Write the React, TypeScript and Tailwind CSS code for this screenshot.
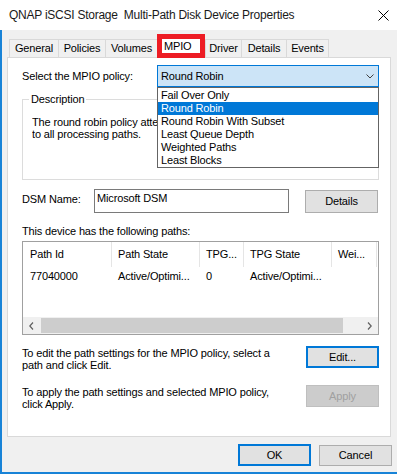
import React from 'react';

const tabsLeft = [
  { label: 'General', w: 'w-[49px]' },
  { label: 'Policies', w: 'w-[47px]' },
  { label: 'Volumes', w: 'w-[52px]' },
];
const tabsRight = [
  { label: 'Driver', w: 'w-[36px]' },
  { label: 'Details', w: 'w-[45px]' },
  { label: 'Events', w: 'w-[43px] border-r' },
];

const policies = [
  'Fail Over Only',
  'Round Robin',
  'Round Robin With Subset',
  'Least Queue Depth',
  'Weighted Paths',
  'Least Blocks',
];

const columns = [
  { head: 'Path Id', cell: '77040000', w: 'w-[89px] pl-[7px]' },
  { head: 'Path State', cell: 'Active/Optimi...', w: 'w-[88px] pl-[6px]' },
  { head: 'TPG...', cell: '0', w: 'w-[44px] pl-[6px]' },
  { head: 'TPG State', cell: 'Active/Optimi...', w: 'w-[88px] pl-[6px]' },
  { head: 'Wei...', cell: '', w: 'w-[45px] pl-[6px]' },
];

function Chevron({ dir }: { dir: 'down' | 'left' | 'right' }) {
  if (dir === 'down') {
    return (
      <svg width="8" height="5" viewBox="0 0 8 5" className="shrink-0">
        <path d="M0.5 0.5 L4 4 L7.5 0.5" fill="none" stroke="#404040" strokeWidth="1" />
      </svg>
    );
  }
  return (
    <svg width="5" height="8" viewBox="0 0 5 8" className="shrink-0">
      <path
        d={dir === 'left' ? 'M4 0.5 L0.8 4 L4 7.5' : 'M1 0.5 L4.2 4 L1 7.5'}
        fill="none"
        stroke="#606060"
        strokeWidth="1.2"
      />
    </svg>
  );
}

export default function App() {
  return (
    <div className="w-[397px] h-[474px] flex flex-col bg-[#f0f0f0] text-black font-['Liberation_Sans',Arial,sans-serif] text-[11px] leading-[13px] tracking-[-0.15px] overflow-hidden">
      {/* title bar */}
      <div className="h-[30px] shrink-0 bg-white flex items-center pl-[9px] pr-[7px]">
        <span className="flex-1 text-[12px] tracking-[-0.25px] text-[#1a1a1a]">
          QNAP iSCSI Storage&nbsp; Multi-Path Disk Device Properties
        </span>
        <svg width="11" height="11" viewBox="0 0 11 11" className="mr-[1px]">
          <path d="M0.5 0.5 L10.5 10.5 M10.5 0.5 L0.5 10.5" stroke="#000" strokeWidth="1" />
        </svg>
      </div>

      <div className="flex-1 flex flex-col border-l-2 border-b-2 border-[#1883d7] pl-[5px]">
        {/* tabs */}
        <div className="h-[27px] flex items-end pl-[2px]">
          {tabsLeft.map((t) => (
            <div
              key={t.label}
              className={`${t.w} h-[18px] border-l border-t border-[#d9d9d9] flex items-center justify-center`}
            >
              {t.label}
            </div>
          ))}
          <div className="relative z-10 w-[48px] h-[24px] -mb-px border-[5px] border-[#ed1c24] bg-white flex items-center pl-[2px]">
            MPIO
          </div>
          {tabsRight.map((t) => (
            <div
              key={t.label}
              className={`${t.w} h-[18px] border-l border-t border-[#d9d9d9] flex items-center justify-center`}
            >
              {t.label}
            </div>
          ))}
        </div>

        {/* panel */}
        <div className="w-[384px] h-[380px] border border-[#d9d9d9] bg-white pl-[14px] pr-[11px] pt-[7px] flex flex-col">
          <div className="flex items-center h-[22px]">
            <span className="w-[135px]">Select the MPIO policy:</span>
            <div className="relative w-[222px] h-[22px]">
              <div className="h-full border border-[#0078d7] bg-[#cce4f7] flex items-center pl-[3px] pr-[4px]">
                <span className="flex-1">Round Robin</span>
                <Chevron dir="down" />
              </div>
              <div className="absolute left-0 top-full z-20 w-full border border-[#646464] bg-white pt-px">
                {policies.map((p) => (
                  <div
                    key={p}
                    className={`h-[13px] pl-[3px] flex items-center ${
                      p === 'Round Robin' ? 'bg-[#0078d7] text-white' : ''
                    }`}
                  >
                    {p}
                  </div>
                ))}
              </div>
            </div>
          </div>

          <fieldset className="mt-[6px] h-[87px] border border-[#dcdcdc] pl-[9px]">
            <legend className="ml-[-3px] px-[2px] leading-[13px]">Description</legend>
            <p className="mt-[10px] w-[125px] leading-[12px] whitespace-nowrap overflow-hidden">
              The round robin policy attempts to evenly distribute incoming requests
              <br />
              to all processing paths.
            </p>
          </fieldset>

          <div className="mt-[9px] flex items-start">
            <span className="w-[72px] mt-[4px]">DSM Name:</span>
            <div className="w-[195px] h-[24px] border border-[#7a7a7a] pl-[2px] pt-[2px]">Microsoft DSM</div>
            <button className="ml-[16px] mt-[1px] w-[73px] h-[23px] border border-[#adadad] bg-[#e1e1e1] flex items-center justify-center">
              Details
            </button>
          </div>

          <div className="mt-[12px]">This device has the following paths:</div>

          <div className="mt-[3px] w-[357px] h-[94px] border border-[#a0a0a0] flex flex-col">
            <div className="h-[25px] flex">
              {columns.map((c) => (
                <div key={c.head} className={`${c.w} h-full border-r border-[#e5e5e5] flex items-center`}>
                  {c.head}
                </div>
              ))}
            </div>
            <div className="h-[18px] flex">
              {columns.map((c) => (
                <div key={c.head} className={`${c.w} h-full flex items-center border-r border-transparent`}>
                  {c.cell}
                </div>
              ))}
            </div>
            <div className="flex-1" />
            <div className="h-[17px] bg-[#f0f0f0] flex items-center">
              <div className="w-[17px] h-full flex items-center justify-center">
                <Chevron dir="left" />
              </div>
              <div className="ml-px w-[302px] h-[15px] bg-[#cdcdcd]" />
              <div className="flex-1" />
              <div className="w-[17px] h-full flex items-center justify-center">
                <Chevron dir="right" />
              </div>
            </div>
          </div>

          <div className="mt-[11px] flex items-start justify-between">
            <p className="pt-px leading-[12px]">
              To edit the path settings for the MPIO policy, select a
              <br />
              path and click Edit.
            </p>
            <button className="w-[73px] h-[22px] border-2 border-[#0078d7] bg-[#e1e1e1] flex items-center justify-center">
              Edit...
            </button>
          </div>

          <div className="mt-[14px] flex items-start justify-between">
            <p className="pt-px leading-[12px]">
              To apply the path settings and selected MPIO policy,
              <br />
              click Apply.
            </p>
            <button className="w-[73px] h-[22px] border border-[#bfbfbf] bg-[#cccccc] text-[#a0a0a0] flex items-center justify-center">
              Apply
            </button>
          </div>
        </div>

        {/* dialog buttons */}
        <div className="mt-[7px] flex justify-end gap-[8px] pr-[5px]">
          <button className="w-[73px] h-[22px] border-2 border-[#0078d7] bg-[#e1e1e1] flex items-center justify-center">
            OK
          </button>
          <button className="w-[73px] h-[21px] mt-px border border-[#adadad] bg-[#e1e1e1] flex items-center justify-center">
            Cancel
          </button>
        </div>
      </div>
    </div>
  );
}
